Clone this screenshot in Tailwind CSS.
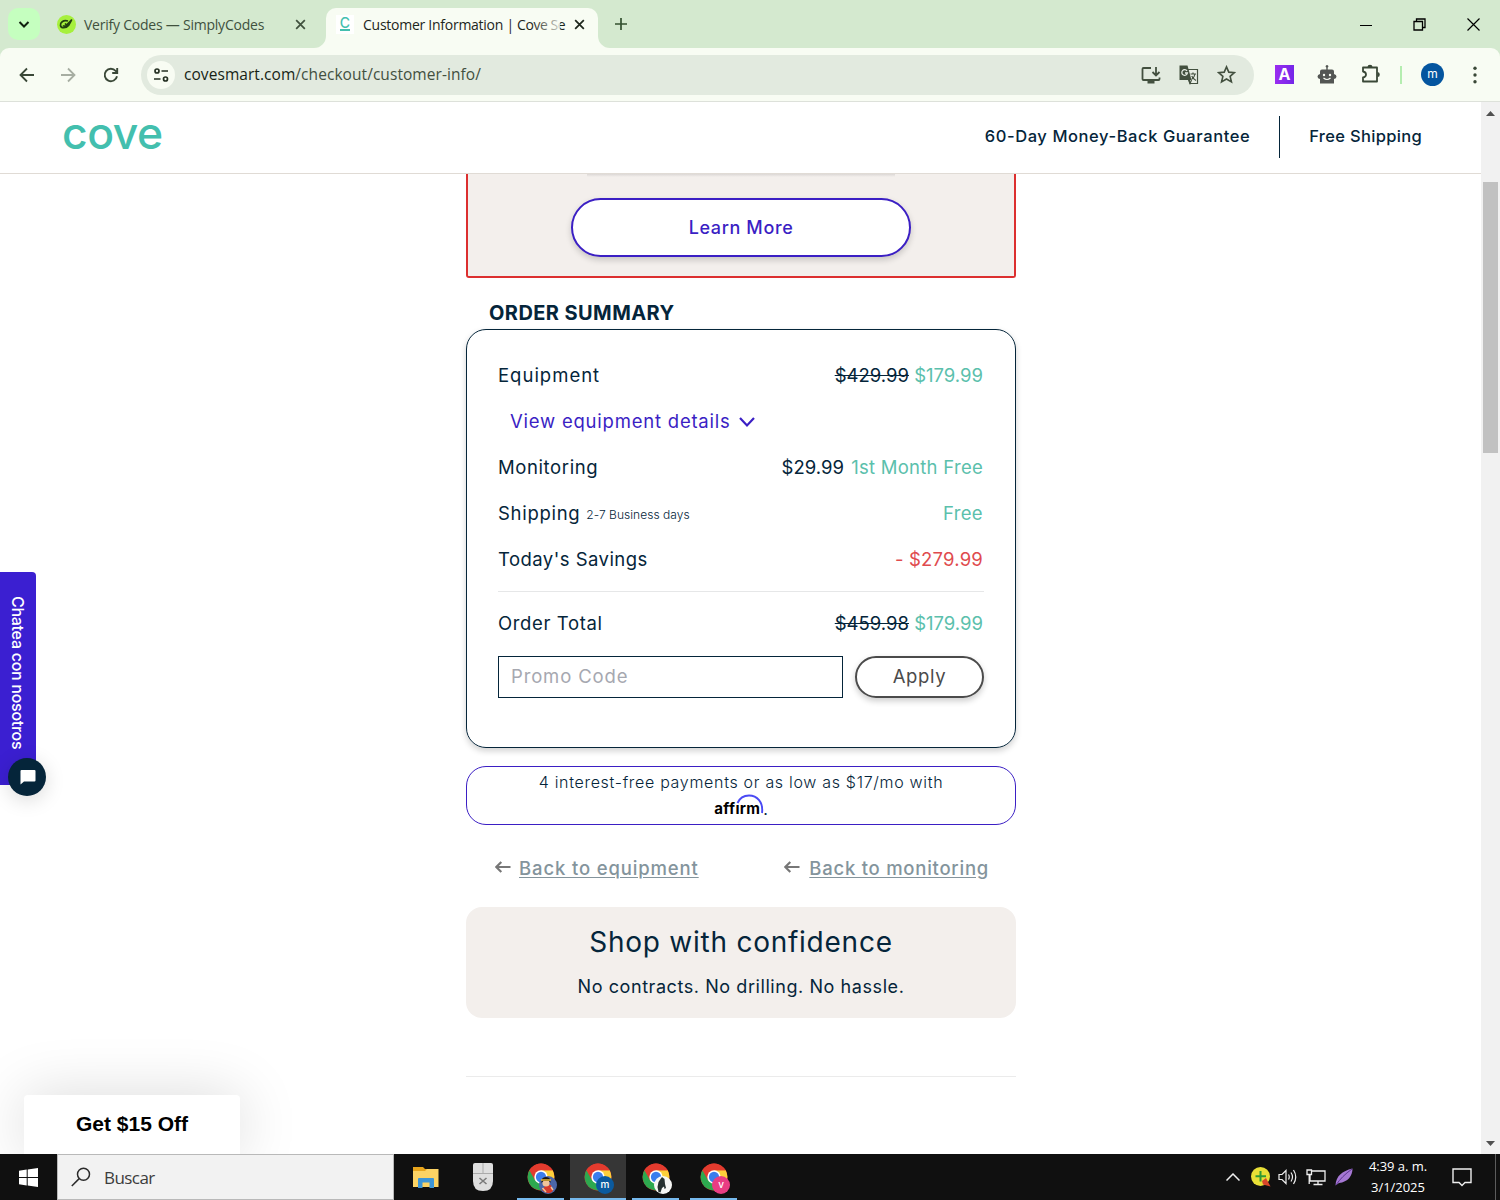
<!DOCTYPE html>
<html lang="en">
<head>
  <meta charset="UTF-8" />
  <meta name="viewport" content="width=device-width, initial-scale=1" />
  <title>Customer Information | Cove Security</title>
  <script src="https://cdn.jsdelivr.net/npm/@tailwindcss/browser@4"></script>
</head>
<body class="bg-white w-[1500px] h-[1200px] overflow-hidden flex flex-col font-['Inter',sans-serif] text-[#05253a]">

  <!-- Shared icons -->
  <svg class="hidden">
    <symbol id="chrome" viewBox="0 0 48 48">
      <circle cx="24" cy="24" r="23" fill="#e33b2e" />
      <path d="M24 24 L4.1 12.5 A23 23 0 0 0 24 47 L34 29.700 Z" fill="#2da94f" />
      <path d="M24 24 L24 12.500 H43.900 A23 23 0 0 1 24 47 Z" fill="#fdd03b" />
      <path d="M4.100 12.500 A23 23 0 0 1 43.900 12.500 H24 L14 30 Z" fill="#e33b2e" />
      <circle cx="24" cy="24" r="11.500" fill="#fff" />
      <circle cx="24" cy="24" r="8.800" fill="#3a7ded" />
    </symbol>
    <symbol id="close" viewBox="0 0 12 12">
      <path d="M2 2 L10 10 M10 2 L2 10" stroke="currentColor" stroke-width="1.600" fill="none" />
    </symbol>
    <symbol id="back" viewBox="0 0 16 12">
      <path d="M15.500 6 H1.500 M6.300 1 L1.300 6 L6.300 11" stroke="currentColor" stroke-width="2.200" fill="none" />
    </symbol>
  </svg>

  <!-- Tab strip -->
  <header class="h-12 shrink-0 bg-[#d4e9cf] flex items-end font-['Open_Sans',sans-serif] text-[14px]">
    <div class="w-8 h-8 ml-2 mb-2 rounded-[10px] bg-[#c5ffbf] flex items-center justify-center">
      <svg class="w-3 h-3" viewBox="0 0 12 12" fill="none" stroke="#10210f" stroke-width="2"><path d="M1.500 4 L6 8.500 L10.500 4" /></svg>
    </div>
    <div class="w-[286px] h-10 pb-[7px] pl-[17px] pr-5 flex items-center text-[#40513e]">
      <svg class="w-[19px] h-[19px] mr-2 shrink-0" viewBox="0 0 19 19">
        <circle cx="9.500" cy="9.500" r="9.500" fill="#a6f03c" />
        <path d="M11 6 C6 4.500 3 8 3.500 10.500 C4 13.500 9 13.500 11.500 10.500 L14.500 5 L9.500 10 L8 8.500 M6 10.500 C7.500 12 10 11 12 8" fill="none" stroke="#22400f" stroke-width="1.700" stroke-linejoin="round" />
      </svg>
      <span class="whitespace-nowrap tracking-[-0.230px]">Verify Codes — SimplyCodes</span>
      <svg class="w-[13px] h-[13px] ml-auto -mr-px"><use href="#close" /></svg>
    </div>
    <div class="relative w-[272px] h-10 rounded-t-[10px] bg-[#f8fcf3] flex items-center pb-[7px] pl-[10px] pr-[13px] text-[#1d261c]">
      <svg class="absolute -left-3 bottom-0 w-3 h-3" viewBox="0 0 12 12"><path d="M12 0 V12 H0 A12 12 0 0 0 12 0" fill="#f8fcf3" /></svg>
      <svg class="absolute -right-3 bottom-0 w-3 h-3" viewBox="0 0 12 12"><path d="M0 0 V12 H12 A12 12 0 0 1 0 0" fill="#f8fcf3" /></svg>
      <span class="w-[18px] h-[19px] bg-white flex flex-col items-center text-[#43bfae]">
        <span class="h-[14px] leading-[15px] font-['Inter',sans-serif] font-medium text-[14px]">C</span>
        <span class="w-[10px] h-[1.500px] bg-[#43bfae]"></span>
      </span>
      <span class="relative ml-[9px] w-[197px] whitespace-nowrap tracking-[-0.460px]"><span class="tracking-[-0.260px]">Customer Information |</span> Cove Se
        <span class="absolute right-0 top-0 h-full w-7 bg-linear-to-r from-[#f8fcf3]/0 to-[#f8fcf3]/80"></span>
      </span>
      <svg class="w-[13px] h-[13px] ml-auto -mr-px"><use href="#close" /></svg>
    </div>
    <svg class="w-3 h-3 ml-[17px] mb-[18px]" viewBox="0 0 12 12" stroke="#33502f" stroke-width="1.700"><path d="M6 0 V12 M0 6 H12" /></svg>
    <div class="ml-auto mb-[17px] flex items-center text-black">
      <svg class="w-3 h-3" viewBox="0 0 12 12" stroke="currentColor"><path d="M0 6.500 H12" /></svg>
      <svg class="w-[13px] h-[13px] ml-[41px]" viewBox="0 0 13 13" fill="none" stroke="currentColor" stroke-width="1.300"><path d="M1 3.500 H9.500 V12 H1 Z M3.500 3.500 V1 H12 V9.500 H9.500" /></svg>
      <svg class="w-[13px] h-[13px] ml-[41px] mr-5" viewBox="0 0 13 13" stroke="currentColor" stroke-width="1.200"><path d="M.5.500 L12.500 12.500 M12.500.500 L.5 12.500" /></svg>
    </div>
  </header>

  <!-- Address bar -->
  <div class="h-[54px] shrink-0 bg-[#d4e9cf]">
    <div class="h-full rounded-t-[9px] bg-[#f8fcf3] border-b border-[#dde1da] flex items-center text-[#43503f]">
      <svg class="w-4 h-4 ml-[19px]" viewBox="0 0 16 16" fill="none" stroke="#3a4837" stroke-width="1.800"><path d="M15 8 H2 M8 1.500 L1.500 8 L8 14.500" /></svg>
      <svg class="w-4 h-4 ml-[25px]" viewBox="0 0 16 16" fill="none" stroke="#a7aea2" stroke-width="1.800"><path d="M1 8 H14 M8 1.500 L14.500 8 L8 14.500" /></svg>
      <svg class="w-4 h-4 ml-[27px]" viewBox="0 0 16 16" fill="none" stroke="#3a4837" stroke-width="1.900"><path d="M14 9.200 A6.200 6.200 0 1 1 12.700 4 L14 5.500 M14.200 1 V6 H9.200" /></svg>
      <div class="w-[1113px] h-10 ml-[22px] rounded-full bg-[#e2eadf] flex items-center pl-[6px] pr-[18px]">
        <span class="w-7 h-7 rounded-full bg-[#f8fcf3] flex items-center justify-center">
          <svg class="w-4 h-4" viewBox="0 0 16 16" fill="none" stroke="#263124" stroke-width="1.700"><circle cx="4" cy="4" r="2" /><path d="M8.500 4 H15 M1 12 H7.500" /><circle cx="12.500" cy="12" r="2" /></svg>
        </span>
        <span class="ml-[9px] font-['Open_Sans',sans-serif] text-[15.500px] tracking-[0.060px] whitespace-nowrap"><span class="text-[#161f15]">covesmart.com</span>/checkout/customer-info/</span>
        <svg class="w-5 h-[18px] ml-auto" viewBox="0 0 20 18" fill="none" stroke="currentColor" stroke-width="1.800"><path d="M10 2 H2.500 Q1.500 2 1.500 3 V13 Q1.500 14 2.500 14 H17.500 Q18.500 14 18.500 13 V11.500 M15 1 V9 M11.500 6 L15 9.500 L18.500 6" /><path d="M6.500 16 H13.500" stroke-width="3" /></svg>
        <svg class="w-5 h-5 ml-[18px]" viewBox="0 0 20 20">
          <path d="M8 4.500 H18.500 V18.500 H11 Z" fill="#e8eee5" stroke="currentColor" stroke-width="1.200" />
          <path d="M.5 .5 H8.500 L12.500 15 H.5 Z" fill="currentColor" />
          <path d="M8 6 A2.800 2.800 0 1 0 8.400 8 H6" stroke="#e8eee5" stroke-width="1.300" fill="none" />
          <path d="M11.500 9 H17 M14 7.500 V9 M16 9 C15.500 12 14 13.500 12.500 14.500 M12.700 11 C14 13.500 15 14.500 17 15.500 M9.500 15 L11 18.500 L12.500 15" stroke="currentColor" stroke-width="1.200" fill="none" />
        </svg>
        <svg class="w-[19px] h-[19px] ml-[18px]" viewBox="0 0 20 20" fill="none" stroke="currentColor" stroke-width="1.700"><path d="M10 2 L12.400 7.500 L18.300 8 L13.800 12 L15.200 17.800 L10 14.700 L4.800 17.800 L6.200 12 L1.700 8 L7.600 7.500 Z" /></svg>
      </div>
      <span class="w-[19px] h-[19px] ml-[21px] bg-linear-to-r from-[#9a2cf0] to-[#7426e8] text-white font-bold text-[16px] leading-[19px] text-center">A</span>
      <svg class="w-5 h-5 ml-[23px]" viewBox="0 0 20 20">
        <path d="M9.300 4.500 V2.500 A1.300 1.300 0 1 1 10.700 2.500 V4.500 H15 Q17 4.500 17 6.500 V9 Q19.500 9.500 19.500 11.500 Q19.500 13.500 17 14 V18.500 H3 V14 Q.5 13.500 .5 11.500 Q.5 9.500 3 9 V6.500 Q3 4.500 5 4.500 Z" fill="#535653" />
        <circle cx="7" cy="10" r="1.200" fill="#f8fcf3" /><circle cx="13" cy="10" r="1.200" fill="#f8fcf3" />
        <path d="M6.500 13 Q10 16 13.500 13" stroke="#f8fcf3" stroke-width="1.200" fill="none" />
      </svg>
      <svg class="w-5 h-5 ml-[24px] mb-0.5" viewBox="0 0 20 20" fill="none" stroke="#3a4837" stroke-width="1.800">
        <path d="M2 3.500 H16 V17.500 H2 V13.500 Q5 13 5 10.500 Q5 8 2 7.500 Z" stroke-linejoin="round" />
        <path d="M6.500 3 A2.500 2.300 0 0 1 11.500 3 Z M16.500 8 A2.300 2.500 0 0 1 16.500 13 Z" fill="#3a4837" stroke="none" />
      </svg>
      <span class="w-0.5 h-[18px] ml-[19px] bg-[#b5edb0]"></span>
      <span class="w-[23px] h-[23px] ml-[19px] rounded-full bg-[#04559f] text-white text-[12px] leading-[22px] text-center">m</span>
      <svg class="w-1 h-[18px] ml-[29px]" viewBox="0 0 4 18" fill="#3a4837"><circle cx="2" cy="2.200" r="1.700" /><circle cx="2" cy="9" r="1.700" /><circle cx="2" cy="15.800" r="1.700" /></svg>
    </div>
  </div>

  <!-- Page viewport -->
  <div class="relative flex-1 flex min-h-0">
    <div class="w-[1481px] flex flex-col">
      <nav class="h-[72px] shrink-0 border-b border-[#e0dbd5] flex items-center pl-[62px] pr-[59px]">
        <span class="text-[44.500px] leading-none font-medium tracking-[-0.500px] text-[#43bfae] -mt-[8px]">cove</span>
        <span class="ml-auto text-[16.500px] font-medium tracking-[0.580px] -mt-[3px]">60-Day Money-Back Guarantee</span>
        <span class="w-px h-[42px] bg-[#05253a] ml-[29px] mr-[29px] -mt-0.5"></span>
        <span class="text-[16.500px] font-medium tracking-[0.320px] -mt-[3px]">Free Shipping</span>
      </nav>

      <main class="w-[550px] ml-[466px] flex flex-col">
        <section class="h-[104px] border-2 border-t-0 border-[#dc2f2f] rounded-b-[3px] bg-[#f3efec] flex flex-col items-center">
          <div class="w-[308px] h-[3px] bg-linear-to-b from-[#dcd8d6] to-[#f3efec]"></div>
          <button class="w-[340px] h-[59px] mt-[21px] rounded-full bg-white border-2 border-[#3b1fc4] text-[#3b1fc4] text-[18px] font-medium tracking-[0.620px] shadow-[0_3px_6px_rgba(0,0,0,0.18)]">Learn More</button>
        </section>

        <h2 class="h-[51px] pt-[20px] pl-[23px] text-[20px] leading-[31px] font-bold tracking-[0.420px]">ORDER SUMMARY</h2>

        <section class="h-[419px] rounded-[20px] border border-[#05253a] shadow-[0_3px_6px_rgba(0,0,0,0.18)] pl-[31px] pr-8 pt-[22px] text-[18.500px] leading-[46px]">
          <div class="flex justify-between">
            <span class="tracking-[1px]">Equipment</span>
            <span><s>$429.99</s> <span class="text-[#5bc0ac]">$179.99</span></span>
          </div>
          <div class="flex items-center pl-3 text-[#3b1fc4]">
            <span class="tracking-[0.780px]">View equipment details</span>
            <svg class="w-4 h-3 ml-[8px] mt-0.5" viewBox="0 0 16 12" fill="none" stroke="currentColor" stroke-width="2.200"><path d="M1 2 L8 9.500 L15 2" /></svg>
          </div>
          <div class="flex justify-between">
            <span class="tracking-[0.600px]">Monitoring</span>
            <span>$29.99 <span class="ml-0.5 text-[#5bc0ac] tracking-[0.270px]">1st Month Free</span></span>
          </div>
          <div class="h-[46px] flex justify-between">
            <span class="tracking-[0.700px]">Shipping<span class="ml-1.5 text-[12px] leading-none font-light tracking-[0.040px] align-[1.500px]">2-7 Business days</span></span>
            <span class="text-[#5bc0ac] tracking-[0.350px]">Free</span>
          </div>
          <div class="flex justify-between">
            <span class="tracking-[0.460px]">Today's Savings</span>
            <span class="text-[#e04b4e] tracking-[0.200px]">- $279.99</span>
          </div>
          <hr class="mt-[9px] -mr-px border-[#e6e7e8]" />
          <div class="flex justify-between mt-[8px]">
            <span class="tracking-[0.620px]">Order Total</span>
            <span><s>$459.98</s> <span class="text-[#5bc0ac]">$179.99</span></span>
          </div>
          <div class="flex mt-[10px] -mr-px gap-3">
            <input type="text" placeholder="Promo Code" class="w-[345px] h-[42px] border border-[#05253a] px-3 pb-0.5 tracking-[0.850px] placeholder:text-[#a6a8b0]" />
            <button class="flex-1 h-[42px] pb-px rounded-full border-2 border-[#4b4b4b] text-[#4b4b4b] leading-none tracking-[0.650px] shadow-[0_3px_6px_rgba(0,0,0,0.2)]">Apply</button>
          </div>
        </section>

        <section class="h-[59px] mt-[18px] rounded-[20px] border border-[#3b1fc4] text-center text-[16px] leading-[26px] font-light pt-0.5">
          <p class="tracking-[0.690px]">4 interest-free payments or as low as $17/mo with</p>
          <p class="flex justify-center items-center h-[26px] pt-px">
            <span class="relative w-[49px] text-left text-[15px] font-bold text-black tracking-[0.350px] leading-[26px]">affırm
              <svg class="absolute left-[22px] -top-[2px] w-7 h-[20px]" viewBox="0 0 28 20" fill="none" stroke="#4a4af4" stroke-width="1.900"><path d="M1.500 9 C3.500 4.500 8 1.500 13 1.500 C21 1.500 27.500 8 26 19" /></svg>
            </span>
            <span class="font-normal">.</span>
          </p>
        </section>

        <div class="h-[82px] flex items-center pl-[29px] pr-[27px] justify-between text-[18.500px] font-medium text-[#84949c]">
          <a href="#" class="flex items-center"><svg class="w-4 h-3 mr-2 mt-0.5 text-[#777]"><use href="#back" /></svg><span class="underline underline-offset-2 mt-[5px] tracking-[0.860px]">Back to equipment</span></a>
          <a href="#" class="flex items-center"><svg class="w-4 h-3 mr-[9px] mt-0.5 text-[#777]"><use href="#back" /></svg><span class="underline underline-offset-2 mt-[5px] tracking-[0.750px]">Back to monitoring</span></a>
        </div>

        <section class="h-[111px] rounded-[16px] bg-[#f3efec] text-center pt-[13px]">
          <h3 class="text-[28px] leading-[45px] tracking-[0.750px]">Shop with confidence</h3>
          <p class="text-[18px] leading-[44px] tracking-[0.570px]">No contracts. No drilling. No hassle.</p>
        </section>
        <hr class="mt-[58px] border-[#ebebeb]" />
      </main>
    </div>

    <!-- Scrollbar -->
    <div class="w-[19px] bg-[#f1f1f1] flex flex-col items-center">
      <svg class="w-[9px] h-[5px] mt-[9px]" viewBox="0 0 9 5" fill="#505050"><path d="M0 5 L4.500 0 L9 5 Z" /></svg>
      <span class="w-[15px] h-[271px] mt-[66px] bg-[#c1c1c1]"></span>
      <svg class="w-[9px] h-[5px] mt-auto mb-[8px]" viewBox="0 0 9 5" fill="#505050"><path d="M0 0 L4.500 5 L9 0 Z" /></svg>
    </div>

    <!-- Floating widgets -->
    <div class="absolute left-0 top-[470px] w-9 h-[213px] rounded-r-[4px] bg-[#3b1fd1] text-white flex justify-center">
      <span class="[writing-mode:vertical-rl] mt-[24px] text-[16px] leading-9 font-medium tracking-[-0.280px] whitespace-nowrap">Chatea con nosotros</span>
    </div>
    <div class="absolute left-2 top-[656px] w-[38px] h-[38px] rounded-full bg-[#05253a] shadow-[0_4px_20px_rgba(0,0,0,0.15)] flex items-center justify-center">
      <svg class="w-4 h-4 ml-0.5" viewBox="0 0 16 16" fill="#fff"><path d="M1.500 1 H14.500 Q15.500 1 15.500 2 V11.500 Q15.500 12.500 14.500 12.500 H4 L.5 15.500 V2 Q.5 1 1.500 1 Z" /></svg>
    </div>
    <div class="absolute left-0 bottom-0 w-[360px] h-[140px] overflow-hidden flex items-end pl-6">
      <div class="w-[216px] h-[59px] rounded-t-[4px] bg-white shadow-[0_0_60px_rgba(0,0,0,0.15)] text-black font-['Liberation_Sans',sans-serif] font-bold text-[21px] leading-[57px] text-center">Get $15 Off</div>
    </div>
  </div>

  <!-- Taskbar -->
  <footer class="h-[46px] shrink-0 bg-[#101010] flex font-['Open_Sans',sans-serif] text-white">
    <div class="w-[57px] flex items-center justify-center">
      <svg class="w-[19px] h-[19px]" viewBox="0 0 19 19" fill="#fff"><path d="M0 2.700 L7.700 1.600 V9 H0 Z M8.700 1.400 L19 0 V9 H8.700 Z M0 10 H7.700 V17.400 L0 16.300 Z M8.700 10 H19 V19 L8.700 17.600 Z" /></svg>
    </div>
    <div class="w-[337px] bg-[#f2f2f2] border border-[#b9b9b9] flex items-center pl-[13px] text-[#3c3c3c] text-[17px]">
      <svg class="w-5 h-5 mr-[13px]" viewBox="0 0 20 20" fill="none" stroke="#2b2b2b" stroke-width="1.500"><circle cx="12.500" cy="7.300" r="6" /><path d="M8.200 11.600 L.8 19" /></svg>
      <span class="mt-px tracking-[-0.550px]">Buscar</span>
    </div>
    <div class="flex pl-[3px]">
      <div class="w-[57px] flex items-center justify-center">
        <svg class="w-[26px] h-[23px]" viewBox="0 0 26 23">
          <path d="M0 1 H10 L12 3 H25 V21 H0 Z" fill="#e8a51c" />
          <path d="M0 5 H12 L14 3 H25.500 V21 H0 Z" fill="#fcd364" />
          <path d="M5 13 Q5 12 6 12 H20 Q21 12 21 13 V22 H16.500 V16.500 H9.500 V22 H5 Z" fill="#3d95d6" />
        </svg>
      </div>
      <div class="w-[58px] flex items-center justify-center">
        <svg class="w-5 h-7" viewBox="0 0 20 28">
          <path d="M0 2 Q0 0 2 0 H18 Q20 0 20 2 V18 Q20 28 10 28 Q0 28 0 18 Z" fill="#dedede" />
          <path d="M0 10.500 H20 M10 0 V10.500" stroke="#aaa" />
          <path d="M6.500 15 L13.500 21 M13.500 15 L6.500 21" stroke="#7a7a7a" stroke-width="1.600" />
        </svg>
      </div>
      <div class="relative w-[58px] flex items-center justify-center">
        <svg class="w-7 h-7"><use href="#chrome" /></svg>
        <svg class="absolute left-[27px] top-[22px] w-[18px] h-[18px]" viewBox="0 0 18 18">
          <circle cx="9" cy="9" r="9" fill="#4b66a8" />
          <path d="M3 14 L7 9 H12 L14 15 Q9 20 3 14" fill="#d63a2b" />
          <circle cx="7" cy="7" r="3.600" fill="#f0c39a" />
          <path d="M2.500 7 Q2 1 7 1 Q12 1 11.500 7 L10 5 H4.500 Z" fill="#1b1512" />
          <path d="M2 4 H12" stroke="#e8b934" stroke-width="1.500" />
          <path d="M3.500 12 L7 16 M12 11 L14 14" stroke="#f0c39a" stroke-width="1.500" />
        </svg>
        <span class="absolute bottom-0 left-[5px] w-[47px] h-0.5 bg-[#76b9ed]"></span>
      </div>
      <div class="relative w-[56px] bg-[#363636] flex items-center justify-center">
        <svg class="w-7 h-7"><use href="#chrome" /></svg>
        <span class="absolute left-[26px] top-[22px] w-[18px] h-[18px] rounded-full bg-[#0b5a9e] font-['Inter',sans-serif] font-medium text-[10px] leading-[17px] text-center">m</span>
        <span class="absolute bottom-0 left-0 w-full h-0.5 bg-[#76b9ed]"></span>
      </div>
      <div class="relative w-[58px] flex items-center justify-center">
        <svg class="w-7 h-7 ml-0.5"><use href="#chrome" /></svg>
        <svg class="absolute left-[28px] top-[22px] w-[18px] h-[18px]" viewBox="0 0 18 18">
          <circle cx="9" cy="9" r="9" fill="#f7f7f5" />
          <path d="M8 1 L10.500 3 L11 8 L12 12 L10.500 13 L10 10.500 L8 12 L6.500 16.500 L4.500 16 L3.500 11 L4.500 6 L6.500 3 Z" fill="#26302f" />
        </svg>
        <span class="absolute bottom-0 left-[6px] w-[47px] h-0.5 bg-[#76b9ed]"></span>
      </div>
      <div class="relative w-[58px] flex items-center justify-center">
        <svg class="w-7 h-7 ml-px"><use href="#chrome" /></svg>
        <span class="absolute left-[28px] top-[22px] w-[18px] h-[18px] rounded-full bg-[#e93d83] font-['Inter',sans-serif] font-medium text-[10px] leading-[17px] text-center">v</span>
        <span class="absolute bottom-0 left-[6px] w-[47px] h-0.5 bg-[#76b9ed]"></span>
      </div>
    </div>

    <div class="ml-auto flex items-center">
      <svg class="w-[14px] h-2" viewBox="0 0 14 8" fill="none" stroke="#eee" stroke-width="1.500"><path d="M.5 7.500 L7 1 L13.500 7.500" /></svg>
      <svg class="w-5 h-5 ml-[11px]" viewBox="0 0 20 20">
        <circle cx="9.500" cy="9.500" r="9.500" fill="#e8df36" />
        <path d="M9.500 4 V14.500 M4.500 9.300 H15" stroke="#2f9a34" stroke-width="2" />
        <path d="M11 14 L15 11 L19.500 19.500 L12 17.500 Z" fill="#d8452a" />
      </svg>
      <svg class="w-5 h-[18px] ml-[7px]" viewBox="0 0 20 18" fill="none" stroke="#eee" stroke-width="1.200"><path d="M1 6.500 H4 L8 2.500 V15.500 L4 11.500 H1 Z M10.500 6.500 Q12 9 10.500 11.500 M13 4.500 Q16 9 13 13.500 M15.500 2 Q20 9 15.500 16" /></svg>
      <svg class="w-5 h-[18px] ml-[8px]" viewBox="0 0 20 18" fill="none" stroke="#eee" stroke-width="1.300"><path d="M6 3 H19 V13 H4 V7 M12 13 V16.500 M7.500 16.500 H16.500 M1 2 H5.500 V6.500 H1 Z M3.200 6.500 V16" /></svg>
      <svg class="w-[18px] h-[18px] ml-[9px]" viewBox="0 0 18 18"><path d="M.5 17.500 C1 8 7 3 17.500 .5 C17.500 8 13 14 4 15 Z" fill="#a678d4" /><path d="M1 17 C5 11 10 6 17 1" stroke="#5d3691" fill="none" /></svg>
      <div class="w-[76px] ml-[7px] text-center text-[13px] leading-[21px] tracking-[-0.040px]">4:39 a. m.<br />3/1/2025</div>
      <svg class="w-5 h-[19px] ml-[16px]" viewBox="0 0 20 19" fill="none" stroke="#eee" stroke-width="1.400"><path d="M1 1 H19 V14.500 H13 L10 17.500 L7 14.500 H1 Z" /></svg>
      <span class="w-px h-[46px] ml-[23px] mr-1 bg-[#5c5c5c]"></span>
    </div>
  </footer>
</body>
</html>
